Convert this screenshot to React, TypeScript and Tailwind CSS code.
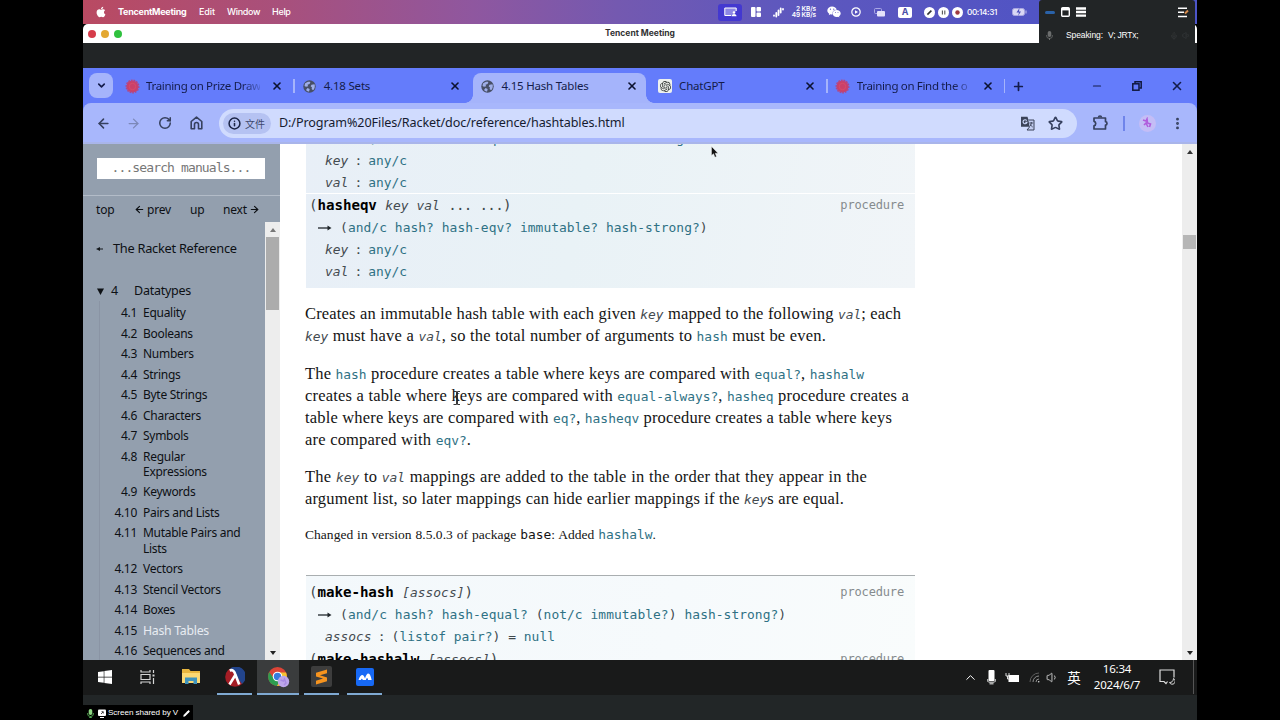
import type { ReactNode } from 'react'
import {
  ArrowLeft, ArrowRight, RotateCw, Info, Star, EllipsisVertical, ChevronDown, ChevronUp,
  X, Plus, Minus, Mic, Pencil, Volume1,
} from 'lucide-react'
import { FaApple, FaWeixin, FaWindows } from 'react-icons/fa'
import { SiOpenai } from 'react-icons/si'

const toc = [
  ['4.1', 'Equality'],
  ['4.2', 'Booleans'],
  ['4.3', 'Numbers'],
  ['4.4', 'Strings'],
  ['4.5', 'Byte Strings'],
  ['4.6', 'Characters'],
  ['4.7', 'Symbols'],
  ['4.8', 'Regular\nExpressions'],
  ['4.9', 'Keywords'],
  ['4.10', 'Pairs and Lists'],
  ['4.11', 'Mutable Pairs and\nLists'],
  ['4.12', 'Vectors'],
  ['4.13', 'Stencil Vectors'],
  ['4.14', 'Boxes'],
  ['4.15', 'Hash Tables'],
  ['4.16', 'Sequences and'],
]

function MenuBar() {
  return (
    <div className="flex h-6 shrink-0 items-center bg-[linear-gradient(90deg,#b94a62_0%,#a8507c_18%,#8f579f_35%,#7459b0_48%,#5f58bd_62%,#5154c4_85%,#4c55c8_100%)] font-['Inter','Liberation_Sans',sans-serif] text-[9px] font-medium text-white">
      <div className="flex w-[35px] justify-center"><FaApple size={12} /></div>
      <span className="w-[81px] text-[9px] font-bold tracking-[-0.25px]">TencentMeeting</span>
      <span className="w-[28px] tracking-[-0.1px]">Edit</span>
      <span className="w-[45px] tracking-[-0.3px]">Window</span>
      <span className="w-[446px] tracking-[-0.3px]">Help</span>
      <div className="flex h-[17px] w-6 items-center justify-center rounded-[3px] bg-[#4338d0]">
        <svg width="13" height="10" viewBox="0 0 13 10" fill="none" stroke="white">
          <path d="M7 8.5H.8V1h11.4v3" fill="#8d87e4" />
          <circle cx="10" cy="5.5" r="1.3" fill="white" stroke="none" />
          <path d="M7.5 9.3c0-3 5-3 5 0z" fill="white" stroke="none" />
        </svg>
      </div>
      <div className="flex w-7 justify-center">
        <svg width="10" height="10" viewBox="0 0 10 10" fill="white">
          <rect width="4.5" height="10" rx="1" />
          <rect x="5.5" width="4.5" height="4.5" rx="1" />
          <rect x="5.5" y="5.5" width="4.5" height="4.5" rx="1" />
        </svg>
      </div>
      <div className="flex w-4 justify-center">
        <svg width="11" height="11" viewBox="0 0 11 11" stroke="white" strokeWidth="1.8" strokeLinecap="round">
          <path d="M1 8.3v.5M3.3 6v3.5M5.5 3.5v4.5M7.7 1.5v4M10 2v.5" />
        </svg>
      </div>
      <div className="w-[38px] pr-2 text-right text-[6.5px] leading-[6px] font-semibold tracking-[-0.1px]">2 KB/s<br />49 KB/s</div>
      <div className="flex w-5 justify-center"><FaWeixin size={14} /></div>
      <div className="flex w-6 justify-center">
        <svg width="10" height="10" viewBox="0 0 10 10" fill="none" stroke="white" strokeWidth="1.2">
          <circle cx="5" cy="5" r="4.2" />
          <path d="M4 3.2 7 5 4 6.8z" fill="white" stroke="none" />
        </svg>
      </div>
      <div className="flex w-[22px] justify-center">
        <svg width="11" height="9" viewBox="0 0 11 9" fill="none">
          <rect x=".5" y=".5" width="7" height="5" rx="1" stroke="#aaa8e6" />
          <rect x="3" y="3" width="8" height="5.5" rx="1" fill="#e5e3fa" />
        </svg>
      </div>
      <div className="flex w-[30px] justify-center">
        <span className="flex h-[11px] w-[14px] items-center justify-center rounded-[2px] bg-white text-[9px] font-bold text-[#4c50a8]">A</span>
      </div>
      <div className="flex w-[46px] items-center justify-center gap-[3px]">
        <svg width="11" height="11" viewBox="0 0 11 11"><circle cx="5.5" cy="5.5" r="5.5" fill="white" /><path d="m3.4 7.6 4-4" stroke="#333" strokeWidth="1.6" /></svg>
        <svg width="11" height="11" viewBox="0 0 11 11"><circle cx="5.5" cy="5.5" r="5.5" fill="white" /><path d="M4.4 3.5v4M6.8 3.5v4" stroke="#555" strokeWidth="1.1" /></svg>
        <svg width="11" height="11" viewBox="0 0 11 11"><circle cx="5.5" cy="5.5" r="5.5" fill="white" /><circle cx="5.5" cy="5.5" r="2.2" fill="#a03a40" /></svg>
      </div>
      <span className="w-[43px] pl-px text-[8.2px] tracking-[-0.35px]">00:14:31</span>
      <svg width="15" height="8" viewBox="0 0 15 8" className="ml-[3px]">
        <rect x=".5" y=".5" width="12" height="7" rx="2" fill="#d9d7f4" stroke="#a8a6e0" />
        <path d="M7.5 0 4.5 4.5H7L6 8l3-4.5H7z" fill="#4d4fbc" />
        <path d="M14 2.5v3" stroke="#c4c2ee" />
      </svg>
    </div>
  )
}

function MeetingPanel() {
  return (
    <div className="absolute top-0 left-[1039px] h-12 w-[156px] rounded-t-[3px] bg-[#222526] font-['Liberation_Sans',sans-serif] whitespace-nowrap text-white">
      <div className="flex h-6 items-center pl-[6px]">
        <span className="h-[3px] w-[10px] rounded-sm bg-[#2a62a8]" />
        <svg className="ml-[6px]" width="9" height="10" viewBox="0 0 9 10" fill="none" stroke="white">
          <rect x=".7" y=".7" width="7.6" height="8.6" rx="1" strokeWidth="1.4" />
          <path d="M1 2.2h7" strokeWidth="2.4" />
        </svg>
        <svg className="ml-[6px]" width="10" height="10" viewBox="0 0 10 10" stroke="white" strokeWidth="2.4"><path d="M0 1.5h10M0 5h10M0 8.6h10" /></svg>
        <svg className="ml-[91px]" width="12" height="11" viewBox="0 0 12 11" fill="none" stroke="white" strokeWidth="1.5">
          <path d="M1 1.2h9M1 5.2h6M1 9.5h9" />
          <path d="m8 6.5 3-3" stroke="#d98c4c" strokeWidth="2" />
        </svg>
      </div>
      <div className="flex h-[23px] items-center pl-[7px]">
        <svg width="7" height="9" viewBox="0 0 7 9" fill="#6c6e6e"><rect x="1.7" width="3.6" height="6" rx="1.8" /><path d="M.5 4v.5a3 3 0 0 0 6 0V4" fill="none" stroke="#6c6e6e" strokeWidth=".8" /><path d="M3 7h1v2H3z" /></svg>
        <span className="ml-[13px] w-[42px] text-[8.5px] tracking-[-0.1px]">Speaking:</span>
        <span className="w-[50px] text-[8.5px] tracking-[-0.2px]">V; JRTx;</span>
        <span className="ml-[12px] flex items-center gap-[4px] text-[#363a3b]">
          <Mic size={8} /><Volume1 size={9} />
        </span>
      </div>
    </div>
  )
}

function Globe() {
  return (
    <svg width="13" height="13" viewBox="0 0 13 13">
      <circle cx="6.5" cy="6.5" r="6.2" fill="#474f66" />
      <path d="M2 3.5c2-2 4-2 5.4-1.6L6.6 4 4.5 4.7l.7 1.5L3 6.8 1.5 6zM8.5 4.8l3-.5c.8 2 .2 4.4-1.4 5.9L8.6 9 9 7.4 7.6 6.3zM4.5 8l2.2 1-.6 2.6C4.7 11.5 3.6 10.8 3 10z" fill="#9faee8" />
    </svg>
  )
}

function CodeDot() {
  return (
    <svg width="15" height="15" viewBox="0 0 15 15">
      <circle cx="7.5" cy="7.5" r="6" fill="#cb4068" stroke="#b04888" strokeWidth="2" strokeDasharray="1.6 1" />
      <circle cx="7.5" cy="7.5" r="3.2" fill="none" stroke="#d44c6c" />
    </svg>
  )
}

interface TabProps {
  icon: ReactNode
  title: string
  active?: boolean
  fade?: boolean
  divider?: boolean
}

function Tab({ icon, title, active, fade, divider }: TabProps) {
  return (
    <div className="flex h-[30px] w-[177.7px] shrink-0 items-center">
      <div className={`relative flex h-full w-[173px] items-center pb-[4px] ${active ? 'rounded-t-[8px] bg-[#a5b4fb]' : ''}`}>
        {active && (
          <>
            <span className="absolute bottom-0 -left-2 size-2 bg-[radial-gradient(circle_at_0_0,transparent_7.5px,#a5b4fb_8px)]" />
            <span className="absolute -right-2 bottom-0 size-2 bg-[radial-gradient(circle_at_100%_0,transparent_7.5px,#a5b4fb_8px)]" />
          </>
        )}
        <div className="flex w-7 shrink-0 justify-center">{icon}</div>
        <span className={`w-[114px] text-[11.5px] whitespace-nowrap ${fade ? 'tracking-[-0.33px] [mask-image:linear-gradient(90deg,#000_84%,rgba(0,0,0,0.2))]' : 'tracking-[-0.2px]'}`}>
          {title}
        </span>
        <X size={12} strokeWidth={3.2} className="ml-[11px] text-[#0c1230]" />
      </div>
      {divider && <span className="mb-[4px] ml-[2px] h-[14px] w-[1.5px] bg-[#a5b4fb]" />}
    </div>
  )
}

function TabStrip() {
  return (
    <div className="flex h-[35px] shrink-0 items-end bg-[#647cfb] font-['Noto_Sans','Open_Sans',sans-serif] text-[#141c4a]">
      <div className="mb-[5px] ml-[6px] flex h-[25px] w-6 shrink-0 items-center justify-center rounded-[8px] bg-[#a5b4fb]">
        <ChevronDown size={11} strokeWidth={3.5} />
      </div>
      <div className="ml-[5px] flex">
        <Tab icon={<CodeDot />} title="Training on Prize Draw" fade divider />
        <Tab icon={<Globe />} title="4.18 Sets" />
        <Tab icon={<Globe />} title="4.15 Hash Tables" active />
        <Tab
          icon={<span className="flex h-[14px] w-[14px] items-center justify-center rounded-[2px] bg-[#eef1ee] text-[#2e3330]"><SiOpenai size={11} /></span>}
          title="ChatGPT"
          divider
        />
        <Tab icon={<CodeDot />} title="Training on Find the o" fade divider />
      </div>
      <div className="mb-[4px] flex h-[26px] flex-1 items-center">
        <Plus size={13} strokeWidth={3.2} className="ml-[6px]" />
        <Minus size={12} strokeWidth={2.4} className="ml-[66px]" />
        <svg className="ml-[29px]" width="10" height="10" viewBox="0 0 10 10" fill="none" stroke="#10183e" strokeWidth="1.5">
          <path d="M3 2.5V.8h6.2V7H7.5" />
          <rect x=".8" y="2.8" width="6.2" height="6.4" />
        </svg>
        <X size={14} strokeWidth={2.8} className="ml-[28px]" />
      </div>
    </div>
  )
}

function AddressBar() {
  return (
    <div className="shrink-0 bg-[#647cfb]">
      <div className="flex h-[41px] items-center rounded-t-[8px] border-b-2 border-[#a9b5ea] bg-[#a8b7fc] pt-px text-[#36405e]">
        <div className="flex w-[40px] justify-center"><ArrowLeft size={15} strokeWidth={2.5} /></div>
        <div className="flex w-[21px] justify-center text-[#7c88b8]"><ArrowRight size={15} /></div>
        <div className="flex w-[41px] justify-center"><RotateCw size={14} strokeWidth={2.6} /></div>
        <div className="flex w-[22px] justify-center">
          <svg width="13" height="14" viewBox="0 0 13 14" fill="none" stroke="currentColor" strokeWidth="1.6" strokeLinejoin="round"><path d="M1.2 5.5 6.5 1.2l5.3 4.3v7.3H8.5V8.5a2 2 0 0 0-4 0v4.3H1.2z" /></svg>
        </div>
        <div className="ml-[12px] flex h-[29px] w-[858px] items-center rounded-full bg-[#d0dbfe] pl-[4px]">
          <div className="flex h-[21px] w-12 items-center rounded-full bg-[#b5c2f2] pl-[5px]">
            <Info size={13} strokeWidth={2.8} className="text-[#1a2344]" />
            <span className="ml-[4px] font-['Noto_Sans_CJK_SC',sans-serif] text-[10px] text-[#3e486c]">文件</span>
          </div>
          <span className="ml-[8px] w-[740px] font-['Noto_Sans','Open_Sans',sans-serif] text-[12.6px] tracking-[-0.1px] text-[#161b30]">
            D:/Program%20Files/Racket/doc/reference/hashtables.html
          </span>
          <svg width="15" height="15" viewBox="0 0 15 15" className="ml-px">
            <path d="M1 .8h6.5l3 10H1z" fill="#3b4358" />
            <path d="M8.5 4H14v10H7l2.5-3" fill="#c3cdf0" stroke="#3b4358" />
            <path d="M6.7 4.6A2 2 0 1 0 7 6.3H5.2" fill="none" stroke="#d0dbfe" strokeWidth="1.1" />
            <path d="M9.3 7h4M11.3 6v1c0 1.7-1 3-2 3.6M10 8.5l2.7 2.5" fill="none" stroke="#3b4358" strokeWidth=".9" />
          </svg>
          <Star size={15} strokeWidth={2.6} className="ml-[13px]" />
        </div>
        <svg className="ml-[16px]" width="15" height="16" viewBox="0 0 15 16" fill="none" stroke="#36405e" strokeWidth="1.7" strokeLinejoin="round">
          <path d="M1 3h11.5v3.7c2 .2 2 3.2 0 3.4V14H1v-3.2c2.3-.6 2.3-4 0-4.5z" />
          <path d="M5.5 2.5c.2-2 2.8-2 3 0" />
        </svg>
        <span className="ml-[15px] h-[15px] w-[1.5px] bg-[#6f84ea]" />
        <span className="ml-[14px] flex h-[17px] w-[17px] items-center justify-center rounded-full bg-[#c4bdf6]">
          <svg width="12" height="12" viewBox="0 0 12 12" fill="none" stroke="#b05cdc" strokeWidth="1.6"><path d="m2 3 3 1 1-2 .5 4 3 1-1 3M3 8l2-2 2 4" /></svg>
        </span>
        <EllipsisVertical size={15} strokeWidth={2.6} className="ml-[14px]" />
      </div>
    </div>
  )
}

function Sidebar() {
  return (
    <div className="flex w-[197px] shrink-0 flex-col bg-[#939fae] font-['Noto_Sans','Open_Sans',sans-serif] text-[#0d1014]">
      <div className="flex h-[52px] shrink-0 items-start border-b border-[#b3bcc8] pt-[14px] pl-[14px]">
        <div className="h-[21px] w-[168px] bg-white text-center font-['DejaVu_Sans_Mono',monospace] text-[13px] leading-[20px] tracking-[-0.88px] text-[#777]">
          ...search manuals...
        </div>
      </div>
      <div className="flex h-[27px] shrink-0 items-center pl-[13px] text-[12px] tracking-[-0.2px]">
        <span className="w-[38px]">top</span>
        <span className="flex w-[56px] items-center gap-[2px]"><ArrowLeft size={11} strokeWidth={2.5} />prev</span>
        <span className="w-[33px]">up</span>
        <span className="flex items-center gap-[2px]">next<ArrowRight size={11} strokeWidth={2.5} /></span>
      </div>
      <div className="-mt-px flex min-h-0 flex-1">
        <div className="w-[182px] overflow-hidden">
          <div className="flex h-[53px] items-center pl-[13px]">
            <svg className="mr-[10px]" width="7" height="4" viewBox="0 0 7 4"><path d="M0 2 4 0v1.4h3v1.2H4V4z" fill="#14181c" /></svg>
            <span className="text-[12.8px] tracking-[-0.27px]">The Racket Reference</span>
          </div>
          <div className="mt-[6px] flex h-[20px] items-center pl-[14px] text-[12.5px]">
            <svg className="mr-[7px]" width="7" height="7" viewBox="0 0 7 7"><path d="M0 .5h7L3.5 7z" fill="#0d1014" /></svg>
            <span className="w-[23px]">4</span>
            <span className="tracking-[-0.25px]">Datatypes</span>
          </div>
          <div className="ml-[16px] border-l border-[#8a94a4] pt-[4.2px]">
            {toc.map(([num, title]) => (
              <div key={num} className="flex pb-[5.3px] text-[12px] leading-[15.2px]">
                <span className="w-[38px] pr-px text-right tracking-[-0.3px]">{num}</span>
                <span className={`pl-[5px] tracking-[-0.28px] whitespace-pre ${num === '4.15' ? 'text-[12.3px] text-[#e8ecf2]' : ''}`}>{title}</span>
              </div>
            ))}
          </div>
        </div>
        <div className="flex w-[15px] flex-col items-center bg-[#ededed]">
          <span className="flex h-[15px] items-center text-[#777]"><svg width="6" height="4"><path d="M0 4 3 0l3 4z" fill="currentColor" /></svg></span>
          <span className="h-[73px] w-[13px] bg-[#acacac]" />
          <span className="mt-auto flex h-[14px] items-center"><svg width="6" height="4"><path d="M0 0h6L3 4z" fill="#222" /></svg></span>
        </div>
      </div>
    </div>
  )
}

function Link({ children }: { children: ReactNode }) {
  return <span className="font-['DejaVu_Sans_Mono',monospace] text-[12.9px] tracking-normal text-[#2f7184]">{children}</span>
}

function Var({ children }: { children: ReactNode }) {
  return <i className="font-['DejaVu_Sans_Mono',monospace] text-[12.9px] tracking-normal text-[#444b50]">{children}</i>
}

function Contract({ name, children }: { name: string; children: ReactNode }) {
  return (
    <div className="flex h-[22px] pl-[19px] whitespace-pre">
      <Var>{name}</Var>
      <span className="w-[20px] text-center">:</span>
      <span>{children}</span>
    </div>
  )
}

function Result({ children }: { children: ReactNode }) {
  return (
    <div className="flex h-[22px] items-center pl-[12px]">
      <svg width="14" height="8" viewBox="0 0 14 8" fill="none" stroke="#20262a" strokeWidth="1.3"><path d="M0 4h12" /><path d="m9.500 1.500 4 2.500-4 2.500z" fill="#20262a" stroke="none" /></svg>
      <span className="ml-[8px] tracking-[0.06px] whitespace-pre [&_span]:tracking-[0.06px]">{children}</span>
    </div>
  )
}

function Signature({ name, children }: { name: string; children: ReactNode }) {
  return (
    <div className="flex h-[22px] items-center justify-between pr-[11px] pl-[3px]">
      <span className="text-[14.2px] tracking-[-0.06px] whitespace-pre">
        (<b className="text-black">{name}</b> {children})
      </span>
      <span className="text-[12px] tracking-[-0.15px] text-[#858b8e]">procedure</span>
    </div>
  )
}

function Docs() {
  return (
    <div className="relative flex-1 overflow-hidden bg-white pl-[26px]">
      <div className="-mt-[16px] w-[609px] bg-[linear-gradient(100deg,#e8eff7,#e9f2f6_45%,#f1f5f8)] font-['DejaVu_Sans_Mono',monospace] text-[13px] leading-[22px] text-[#3f484c]">
        <Result>(<Link>and/c hash? hash-eq? immutable? hash-strong?</Link>)</Result>
        <Contract name="key"><Link>any/c</Link></Contract>
        <Contract name="val"><Link>any/c</Link></Contract>
        <div className="-mt-px h-px bg-white" />
        <Signature name="hasheqv"><Var>key val</Var> <span className="tracking-[-0.7px]">... ...</span></Signature>
        <div className="h-px" />
        <Result>(<Link>and/c hash? hash-eqv? immutable? hash-strong?</Link>)</Result>
        <Contract name="key"><Link>any/c</Link></Contract>
        <Contract name="val"><Link>any/c</Link></Contract>
        <div className="h-[5px]" />
      </div>

      <div className="mt-[15px] -ml-px font-['Liberation_Serif',serif] text-[16.5px] leading-[22px] tracking-[0.17px] whitespace-nowrap text-[#141414] [&>div>div]:h-[22px] [&>div>div]:[text-align-last:justify]">
        <div>
          <div className="w-[595px]">Creates an immutable hash table with each given <Var>key</Var> mapped to the following <Var>val</Var>; each</div>
          <div className="w-[521px]"><Var>key</Var> must have a <Var>val</Var>, so the total number of arguments to <Link>hash</Link> must be even.</div>
        </div>
        <div className="mt-[15.5px]">
          <div className="w-[559px]">The <Link>hash</Link> procedure creates a table where keys are compared with <Link>equal?</Link>, <Link>hashalw</Link></div>
          <div className="w-[604px]">creates a table where keys are compared with <Link>equal-always?</Link>, <Link>hasheq</Link> procedure creates a</div>
          <div className="w-[587px]">table where keys are compared with <Link>eq?</Link>, <Link>hasheqv</Link> procedure creates a table where keys</div>
          <div className="w-[166px]">are compared with <Link>eqv?</Link>.</div>
        </div>
        <div className="mt-[15.5px]">
          <div className="w-[562px]">The <Var>key</Var> to <Var>val</Var> mappings are added to the table in the order that they appear in the</div>
          <div className="w-[539px]">argument list, so later mappings can hide earlier mappings if the <Var>key</Var>s are equal.</div>
        </div>
        <div className="mt-[14px] text-[13.5px] tracking-[0.04px]">
          <div className="w-[351px]">Changed in version 8.5.0.3 of package <span className="font-['DejaVu_Sans_Mono',monospace] text-[12.9px] tracking-normal">base</span>: Added <Link>hashalw</Link>.</div>
        </div>
      </div>

      <div className="mt-[29px] w-[609px] border-t border-[#a9aeb0] bg-[linear-gradient(100deg,#f3f8fb,#f6fafc_60%,#f9fcfc)] pt-[5px] font-['DejaVu_Sans_Mono',monospace] text-[13px] leading-[22px] text-[#3f484c]">
        <Signature name="make-hash"><Var>[assocs]</Var></Signature>
        <div className="h-px" />
        <Result>(<Link>and/c hash? hash-equal?</Link> (<Link>not/c immutable?</Link>) <Link>hash-strong?</Link>)</Result>
        <Contract name="assocs">(<Link>listof pair?</Link>) = <Link>null</Link></Contract>
        <Signature name="make-hashalw"><Var>[assocs]</Var></Signature>
      </div>

      {/* Pointers */}
      <svg className="absolute top-[2px] left-[431px]" width="8" height="12" viewBox="0 0 8 12"><path d="M.5.5v9l2-1.8 1.500 3.500 1.500-.7L4.200 7.200H7z" fill="#111" stroke="white" strokeWidth=".4" /></svg>
      <svg className="absolute top-[247px] left-[173px]" width="8" height="14" viewBox="0 0 8 14" fill="none" stroke="#222"><path d="M.5.5h3v13h-3M7 .5H4.500v13H7" strokeWidth=".9" /></svg>
    </div>
  )
}

function TaskItem({ children, open, active }: { children: ReactNode; open?: boolean; active?: boolean }) {
  return (
    <div className={`flex h-full flex-col items-center ${active ? 'w-[42px] bg-[#3a3c3d]' : 'w-[35px]'}`}>
      <div className="flex flex-1 items-center">{children}</div>
      <span className={`h-[2px] w-full ${open ? 'bg-[#7fa9d2]' : ''}`} />
    </div>
  )
}

function TaskBar() {
  return (
    <div className="flex h-[35px] shrink-0 items-center bg-[#191a1a] text-white">
      <div className="flex h-full gap-[8px] pl-[4px]">
        <TaskItem>
          <FaWindows size={16} />
        </TaskItem>
        <TaskItem>
          <svg width="16" height="16" viewBox="0 0 16 16" fill="none" stroke="#d5d5d5" strokeWidth="1.2"><path d="M1 1v2h9V1M1 15v-2h9v2M1 5.500h9v5H1zM13.500 1v3M13.500 9v6" /><path d="M12.500 6.500h2" strokeWidth="2" /></svg>
        </TaskItem>
        <TaskItem>
          <svg width="20" height="17" viewBox="0 0 20 17"><path d="M1 1h7l1.500 2H19v12H1z" fill="#e8b63f" /><path d="M1 5h18v10H1z" fill="#fbd974" /><path d="M4 16V9.500h12V16h-3.500v-3h-5v3z" fill="#3f94bd" /></svg>
        </TaskItem>
      </div>
      <div className="flex h-full gap-[5px] pl-[9px]">
        <TaskItem open>
          <svg width="20" height="20" viewBox="0 0 20 20"><circle cx="10" cy="10" r="9.800" fill="#a51d25" /><path d="M5 1.500A9.800 9.800 0 0 1 17 17L10 7z" fill="#22448c" /><path d="M4.700 3.500c3-1.200 4.500.5 5.500 3.500l4 10.500M10 8.500 4.500 17.500" fill="none" stroke="white" strokeWidth="2.600" /></svg>
        </TaskItem>
        <TaskItem open active>
          <svg width="23" height="22" viewBox="0 0 23 22">
            <circle cx="10.5" cy="10.5" r="9.5" fill="#dc4437" />
            <path d="M2.2 6A9.5 9.5 0 0 0 10 20l4.500-8h-8z" fill="#2d9d50" />
            <path d="M10.5 6.500h8.500a9.500 9.500 0 0 1-9 13.500l4.500-8z" fill="#f5c332" />
            <circle cx="10.5" cy="10.5" r="4.8" fill="white" />
            <circle cx="10.5" cy="10.5" r="3.7" fill="#377bdf" />
            <circle cx="16.5" cy="15.5" r="5.7" fill="#bda6ea" />
            <path d="m13.500 14 3 1 1-2 1.500 4-2 2" stroke="#a88ae2" fill="none" strokeWidth="1.500" />
          </svg>
        </TaskItem>
        <TaskItem open>
          <svg width="21" height="21" viewBox="0 0 21 21"><rect width="21" height="21" rx="2" fill="#3d3d3d" /><path d="M16 3.500v3.700L9 9.300l7 2.200v3.800L5 18.500v-3.700l7-2.200-7-2.200V6.800z" fill="#f7941e" /></svg>
        </TaskItem>
      </div>
      <div className="flex h-full pl-[8px]">
        <TaskItem open>
          <svg width="18" height="18" viewBox="0 0 18 18"><rect width="18" height="18" rx="2" fill="#1769f5" /><path d="M2.500 12C3.500 8.500 5 7 6.300 7c1.200 0 1.900 1.500 2.700 3.500C9.800 7.500 11 5.500 12.300 5.500c1.700 0 2.700 3 3.400 6.500H12c0-1-.4-2-.9-2-.6 0-.9 1-1.200 2H6.800c-.3-.8-.6-1.300-1-1.300-.5 0-.7.600-1 1.300z" fill="white" /></svg>
        </TaskItem>
      </div>
      <div className="ml-auto flex h-full items-center pb-px">
        <div className="flex w-[22px] justify-center"><ChevronUp size={15} strokeWidth={1.6} /></div>
        <div className="flex w-5 justify-center">
          <svg width="9" height="15" viewBox="0 0 9 15" fill="white"><rect x="1.500" width="6" height="11" rx="1" /><path d="M0 9h1.500v2.500h6V9H9v2.500L6.500 13v1.500h-4V13L0 11.500z" fill="#aaa" /></svg>
        </div>
        <div className="flex w-[22px] justify-center">
          <svg width="15" height="11" viewBox="0 0 15 11"><rect x="3.500" y="3" width="10.500" height="7" fill="white" /><path d="M1 1v3h3V1M2.500 4v3h2" fill="none" stroke="#ddd" /></svg>
        </div>
        <div className="flex w-[22px] justify-center">
          <svg width="11" height="11" viewBox="0 0 11 11" fill="none" stroke="#5e5e5e"><path d="M1 10A9 9 0 0 1 10 1" /><path d="M4 10a6 6 0 0 1 6-6M7 10a3 3 0 0 1 3-3" stroke="#8f8f8f" /><circle cx="9.7" cy="9.7" r=".8" fill="#ddd" stroke="none" /></svg>
        </div>
        <div className="flex w-[14px] justify-center text-[#d0d0d0]"><Volume1 size={13} strokeWidth={1.7} /></div>
        <span className="w-[30px] text-center font-['Noto_Sans_CJK_SC',sans-serif] text-[13.5px] leading-5">英</span>
        <div className="w-[56px] text-center font-['Noto_Sans','Open_Sans',sans-serif] text-[11.5px] leading-[16px] tracking-[-0.2px]">
          16:34<br />2024/6/7
        </div>
        <div className="flex w-[44px] justify-center">
          <svg width="16" height="16" viewBox="0 0 16 16" fill="none" stroke="#ddd" strokeWidth="1.2"><path d="M8.500 12.500 7 14.500l-2-2H1V1h14v7.500" /><path d="M14.500 9.500a3 3 0 1 1-4 4c2 .3 4-1.500 4-4z" strokeWidth="1" /></svg>
        </div>
        <span className="mr-[3px] ml-[4px] h-full w-px bg-[#555]" />
      </div>
    </div>
  )
}

export default function App() {
  return (
    <div className="relative flex h-[720px] w-[1280px] overflow-hidden bg-black pl-[83px]">
      <div className="flex w-[1114px] flex-col">
        <MenuBar />
        <div className="flex h-[19px] shrink-0 items-center rounded-t-[5px] bg-white">
          <div className="flex w-[400px] gap-[5px] pl-[5px]">
            <span className="size-2 rounded-full bg-[#d63c4a]" />
            <span className="size-2 rounded-full bg-[#e3a832]" />
            <span className="size-2 rounded-full bg-[#2fc13e]" />
          </div>
          <span className="w-[314px] text-center font-['Inter','Liberation_Sans',sans-serif] text-[8.5px] font-bold text-[#333]">
            Tencent Meeting
          </span>
        </div>
        <div className="h-[25px] shrink-0 bg-[#222526]" />
        <TabStrip />
        <AddressBar />
        <div className="flex h-[516px] shrink-0">
          <Sidebar />
          <Docs />
          <div className="flex w-[15px] flex-col items-center bg-[#ededed]">
            <span className="flex h-4 items-center"><svg width="6" height="4"><path d="M0 4 3 0l3 4z" fill="#333" /></svg></span>
            <span className="mt-[75px] h-[14px] w-[13px] bg-[#b6b6b6]" />
            <span className="mt-auto flex h-[14px] items-center"><svg width="6" height="4"><path d="M0 0h6L3 4z" fill="#222" /></svg></span>
          </div>
        </div>
        <TaskBar />
        <div className="flex flex-1 items-end bg-[#222627]">
          <div className="flex h-[15px] w-[110px] items-center bg-black pt-px pl-[4px] font-['Liberation_Sans',sans-serif] text-[8.1px] whitespace-nowrap text-white">
            <svg className="shrink-0" width="7" height="9" viewBox="0 0 7 9" fill="#8ed682"><rect x="1.700" width="3.600" height="6" rx="1.800" /><path d="M.5 4v.5a3 3 0 0 0 6 0V4M3.500 7.500V9M2 8.700h3" fill="none" stroke="#58b458" strokeWidth=".9" /></svg>
            <svg className="ml-[4px] shrink-0" width="8" height="9" viewBox="0 0 8 9"><rect y=".5" width="8" height="6.500" rx="1" fill="white" /><path d="M2 8.500h4" stroke="white" /><path d="m3 5 2-2M3.500 2.700h1.800v1.800" stroke="#222" fill="none" strokeWidth=".8" /></svg>
            <span className="ml-[2px] w-[75px] tracking-[-0.05px]">Screen shared by V</span>
            <Pencil size={7} className="shrink-0" fill="white" />
          </div>
        </div>
      </div>
      <MeetingPanel />
    </div>
  )
}
